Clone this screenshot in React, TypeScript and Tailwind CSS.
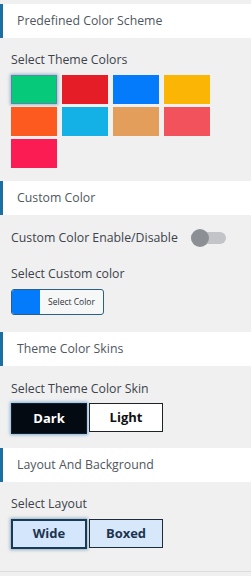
import React from 'react';

const swatches = [
  '#06c97a', '#e41d27', '#047bfa', '#fab505',
  '#fd5a1f', '#13b1e6', '#e49e5c', '#f2525b',
  '#fa1c53',
];

const SectionHeader: React.FC<{ title: string }> = ({ title }) => (
  <div className="h-[34px] bg-white border-l-[3px] border-[#1c6fa3] flex items-center pl-[14px]">
    <span className="text-[12.3px] text-[#50575e]">{title}</span>
  </div>
);

const Label: React.FC<{ children: React.ReactNode }> = ({ children }) => (
  <div className="text-[12.3px] leading-[18px] text-[#3c434a]">{children}</div>
);

export default function App() {
  return (
    <div
      className="w-[251px] h-[576px] bg-[#f0f0f1] pt-[4px] overflow-hidden"
      style={{ fontFamily: '"Open Sans", "Noto Sans", sans-serif' }}
    >
      <SectionHeader title="Predefined Color Scheme" />
      <div className="px-[11px] pt-[13px] pb-[13px]">
        <Label>Select Theme Colors</Label>
        <div className="mt-[6px] grid grid-cols-[46px_46px_46px_46px] gap-x-[5px] gap-y-[3px]">
          {swatches.map((c, i) => (
            <div
              key={c}
              className={
                i === 0
                  ? 'h-[29px] border border-[#4f8ba6] shadow-[0_0_3px_1px_rgba(60,110,150,0.45)]'
                  : 'h-[29px]'
              }
              style={{ backgroundColor: c }}
            />
          ))}
        </div>
      </div>

      <SectionHeader title="Custom Color" />
      <div className="px-[11px] pt-[13px] pb-[17px]">
        <div className="flex items-center h-[20px]">
          <Label>Custom Color Enable/Disable</Label>
          <div className="ml-[13px] relative w-[35px] h-[12px] rounded-full bg-[#c3c4c7]">
            <div className="absolute left-0 top-[-3px] w-[18px] h-[18px] rounded-full bg-[#8c8f94]" />
          </div>
        </div>
        <div className="mt-[17px]">
          <Label>Select Custom color</Label>
        </div>
        <div className="mt-[6px] flex w-[93px] h-[26px] rounded-[3px] border border-[#2c5f85] overflow-hidden bg-[#f6f7f7]">
          <div className="w-[28px] bg-[#047bfa]" />
          <div className="flex-1 flex items-center justify-center text-[8.5px] text-[#2c3338]">Select Color</div>
        </div>
      </div>

      <SectionHeader title="Theme Color Skins" />
      <div className="px-[11px] pt-[14px] pb-[14px]">
        <Label>Select Theme Color Skin</Label>
        <div className="mt-[5px] flex gap-[2px]">
          <div className="w-[76px] h-[31px] bg-[#030a12] border border-[#0d2236] shadow-[0_0_3px_1px_rgba(90,150,200,0.7)] flex items-center justify-center text-[13px] font-bold text-white">
            Dark
          </div>
          <div className="w-[74px] h-[29px] bg-white border border-[#1d2327] flex items-center justify-center text-[13px] font-bold text-[#111]">
            Light
          </div>
        </div>
      </div>

      <SectionHeader title="Layout And Background" />
      <div className="px-[11px] pt-[13px] pb-[22px] border-b border-[#dcdcde]">
        <Label>Select Layout</Label>
        <div className="mt-[6px] flex gap-[2px]">
          <div className="w-[76px] h-[30px] bg-[#d4e6fb] border-2 border-[#173b57] shadow-[0_0_3px_1px_rgba(60,110,150,0.5)] flex items-center justify-center text-[13px] font-bold text-[#1d3550]">
            Wide
          </div>
          <div className="w-[74px] h-[29px] bg-[#d8e8fb] border border-[#1d2b3a] flex items-center justify-center text-[13px] font-bold text-[#1d3550]">
            Boxed
          </div>
        </div>
      </div>
    </div>
  );
}
